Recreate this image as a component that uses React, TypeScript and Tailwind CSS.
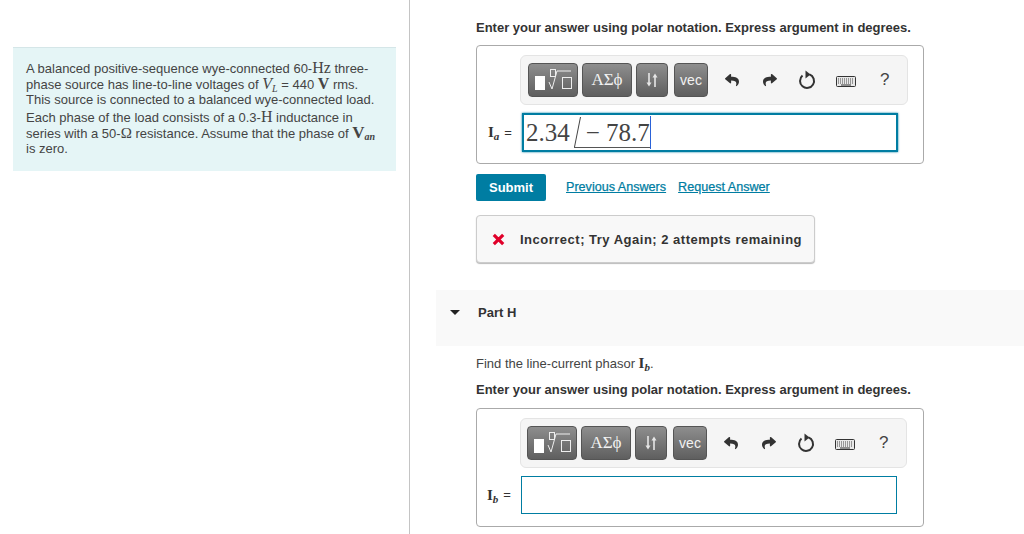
import { FaReply, FaShare } from 'react-icons/fa';

const sans = "font-['Liberation_Sans',Arial,sans-serif]";
const serif = "font-['Liberation_Serif','Times_New_Roman',serif]";

function KeyboardIcon() {
  return (
    <svg width="20" height="11" viewBox="0 0 20 11" className="block">
      <rect x="0.5" y="0.5" width="19" height="10" rx="1" fill="#e8e8e8" stroke="#333" />
      <path d="M2 3h16M2 5h16M2 7h16" stroke="#444" strokeWidth="1" strokeDasharray="1 1" />
      <path d="M5 9h10" stroke="#333" strokeWidth="1" />
    </svg>
  );
}

function ResetIcon() {
  return (
    <svg width="18" height="20" viewBox="0 0 18 20" className="block">
      <path d="M11.5 4.4A7 7 0 1 1 4.5 5.6" fill="none" stroke="#333" strokeWidth="2" />
      <path d="M7.5 0.5v8l5-4z" fill="#333" />
    </svg>
  );
}

function TemplatesIcon() {
  return (
    <svg width="40" height="24" viewBox="0 0 40 24" className="block">
      <rect x="2" y="8" width="10" height="14" fill="#fff" />
      <rect x="17.5" y="1.5" width="5" height="7" fill="none" stroke="#eee" />
      <path d="M16 14l3 7 5-18h14" fill="none" stroke="#eee" strokeWidth="1" />
      <rect x="29.5" y="9.5" width="9" height="11" fill="none" stroke="#eee" />
    </svg>
  );
}

function ArrowsIcon() {
  return (
    <svg width="12" height="14" viewBox="0 0 12 14" className="block">
      <path d="M3 0v11" stroke="#e6e6e6" strokeWidth="1.6" />
      <path d="M0.5 9.5L3 13.5 5.5 9.5z" fill="#e6e6e6" />
      <path d="M9 14V3" stroke="#e6e6e6" strokeWidth="1.6" />
      <path d="M6.5 4.5L9 0.5 11.5 4.5z" fill="#e6e6e6" />
    </svg>
  );
}

function ToolButton({ className, children }: { className: string; children: React.ReactNode }) {
  return (
    <div className={`flex h-[34px] items-center justify-center rounded-[4px] border border-[#555] bg-gradient-to-b from-[#8e8e8e] to-[#5f5f5f] text-[#f2f2f2] ${className}`}>
      {children}
    </div>
  );
}

function Toolbar({ filled }: { filled: boolean }) {
  return (
    <div className={`flex h-[50px] items-center rounded-[6px] border border-[#e4e4e4] bg-[#f5f5f5] ${filled ? 'w-[388px] pl-[7px]' : 'w-[387px] pl-[6px]'}`}>
      <div className="flex gap-[4px]">
        <ToolButton className="w-[50px]"><TemplatesIcon /></ToolButton>
        <ToolButton className={`w-[50px] text-[17px] ${serif}`}>ΑΣϕ</ToolButton>
        <ToolButton className="w-[32px]"><ArrowsIcon /></ToolButton>
        <ToolButton className={`ml-[2px] w-[34px] text-[14px] ${sans}`}>vec</ToolButton>
      </div>
      <div className="ml-[17px] flex items-center text-[#333]">
        <FaReply className="h-[14px] w-[14px]" />
        <FaShare className="ml-[24px] h-[14px] w-[14px]" />
        <div className="ml-[21px]"><ResetIcon /></div>
        <div className="ml-[20px] pt-[3px]"><KeyboardIcon /></div>
        <span className={`ml-[24px] text-[17px] text-[#444] ${sans}`}>?</span>
      </div>
    </div>
  );
}

function Phasor({ sub }: { sub: string }) {
  return (
    <span className="whitespace-nowrap text-[#333]">
      <span className={`text-[15px] font-bold ${serif}`}>I</span>
      <sub className={`text-[11px] font-bold italic ${serif}`}>{sub}</sub>
    </span>
  );
}

function AnswerBox({ sub, filled }: { sub: string; filled: boolean }) {
  return (
    <div className="h-[119px] w-[448px] rounded-[4px] border border-[#aaa] pt-[9px]">
      <div className="pl-[43px]">
        <Toolbar filled={filled} />
      </div>
      <div className={`mt-[8px] flex items-center ${filled ? 'pl-[11px]' : 'pl-[10px]'}`}>
        <div className={`flex w-[34px] items-center gap-[5px] text-[13px] text-[#333] ${sans}`}>
          <Phasor sub={sub} />
          <span>=</span>
        </div>
        {filled ? (
          <div className={`flex h-[39px] w-[376px] items-center border-2 border-[#007da2] pl-[2px] text-[25px] text-[#444] shadow-[0_0_2px_#007da2] ${serif}`}>
            <span>2.34</span>
            <div className="ml-[4px] flex h-[31px] items-center border-b border-[#555] leading-none">
              <svg width="7" height="30" viewBox="0 0 7 30" className="shrink-0">
                <path d="M6.5 0L0.5 30" stroke="#444" strokeWidth="1" fill="none" />
              </svg>
              <span className="pl-[5px]">− 78.7</span>
            </div>
            <span className="h-[33px] w-px bg-[#2a62d8]" />
          </div>
        ) : (
          <div className="h-[38px] w-[376px] border border-[#007da2]" />
        )}
      </div>
    </div>
  );
}

function Line({ children }: { children: React.ReactNode }) {
  return <p className="h-[16.2px] whitespace-nowrap leading-[16px]">{children}</p>;
}

export default function App() {
  return (
    <div className={`flex h-[534px] w-[1024px] overflow-hidden bg-white text-[#333] ${sans}`}>
      <div className="h-full w-[410px] shrink-0 border-r border-[#c4c4c4] pt-[47px] pl-[13px]">
        <div className="h-[124px] w-[383px] border-t border-[#d5e6e8] bg-[#e5f5f6] pt-[12px] pl-[13px] text-[13px] text-[#444]">
          <Line>A balanced positive-sequence wye-connected 60-<span className={`text-[16px] ${serif}`}>Hz</span> three-</Line>
          <Line>phase source has line-to-line voltages of <span className={`text-[16px] italic ${serif}`}>V<sub className="text-[10px]">L</sub></span> = 440 <span className={`text-[16px] font-bold ${serif}`}>V</span> rms.</Line>
          <Line>This source is connected to a balanced wye-connected load.</Line>
          <Line>Each phase of the load consists of a 0.3-<span className={`text-[16px] ${serif}`}>H</span> inductance in</Line>
          <Line>series with a 50-<span className={`text-[15px] ${serif}`}>Ω</span> resistance. Assume that the phase of <span className={`text-[17px] font-bold ${serif}`}>V<sub className="text-[10px] italic">an</sub></span></Line>
          <Line>is zero.</Line>
        </div>
      </div>
      <div className="flex min-w-0 flex-1 flex-col pl-[26px]">
        <div className="pl-[40px]">
          <p className="mt-[20px] h-[25px] text-[13px] leading-[15px] font-bold">Enter your answer using polar notation. Express argument in degrees.</p>
          <AnswerBox sub="a" filled />
          <div className="mt-[10px] flex items-center">
            <div className="flex h-[27px] w-[70px] items-center justify-center rounded-[2px] bg-[#007da2] text-[13px] font-bold text-white">Submit</div>
            <a className="ml-[20px] text-[12.6px] text-[#007da2] underline [-webkit-text-stroke:0.25px_#007da2]">Previous Answers</a>
            <a className="ml-[12px] text-[12.6px] text-[#007da2] underline [-webkit-text-stroke:0.25px_#007da2]">Request Answer</a>
          </div>
          <div className="mt-[14px] flex h-[48px] w-[339px] items-center rounded-[4px] border border-[#ccc] bg-[#f8f8f8] pt-[1px] pl-[15px] text-[13px] font-bold shadow-[0_1px_1px_#bbb]">
            <svg width="13" height="13" viewBox="0 0 13 13" className="shrink-0">
              <path d="M1.8 1.8L11.2 11.2M11.2 1.8L1.8 11.2" stroke="#e0002a" strokeWidth="3.2" />
            </svg>
            <span className="ml-[15px] tracking-[0.5px]">Incorrect; Try Again; 2 attempts remaining</span>
          </div>
        </div>
        <div className="mt-[27px] flex h-[56px] items-start bg-[#f9f9f9] pt-[15px] pl-[14px]">
          <span className="mt-[5px] h-0 w-0 border-x-[5px] border-t-[5px] border-x-transparent border-t-[#222]" />
          <span className="ml-[18px] text-[13px] leading-[15px] font-bold">Part H</span>
        </div>
        <div className="pl-[40px]">
          <p className="mt-[9px] h-[17px] text-[13px] leading-[17px] text-[#444]">Find the line-current phasor <Phasor sub="b" />.</p>
          <p className="mt-[10px] h-[26px] text-[13px] leading-[15px] font-bold">Enter your answer using polar notation. Express argument in degrees.</p>
          <AnswerBox sub="b" filled={false} />
        </div>
      </div>
    </div>
  );
}
